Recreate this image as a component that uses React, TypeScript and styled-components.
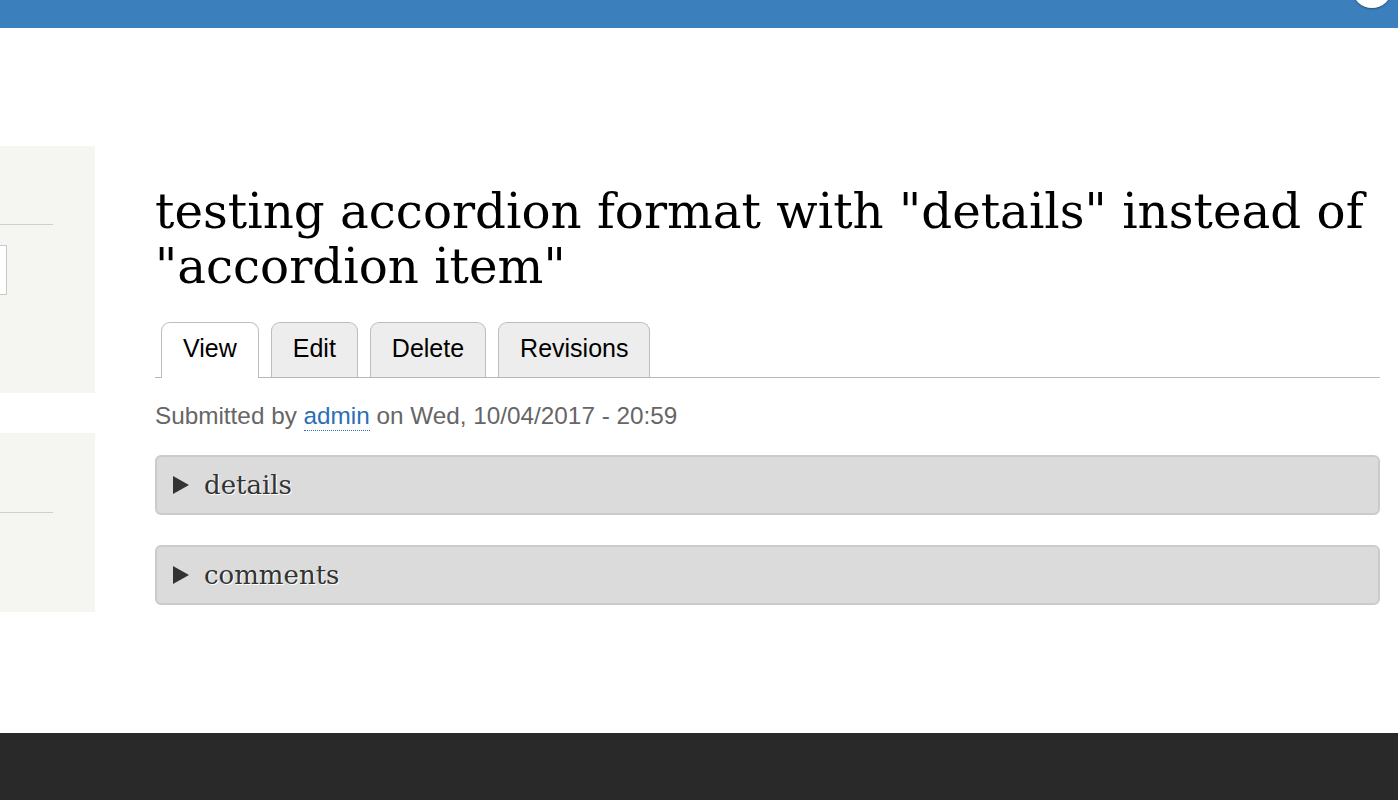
import styled, { createGlobalStyle } from 'styled-components';

const GlobalStyle = createGlobalStyle`
  html, body {
    margin: 0;
    padding: 0;
    background: #fff;
  }
  body {
    font-family: "Liberation Sans", Arial, sans-serif;
    overflow: hidden;
  }
`;

const Page = styled.div`
  width: 1398px;
  height: 800px;
  display: flex;
  flex-direction: column;
  overflow: hidden;
`;

const TopBar = styled.header`
  position: relative;
  height: 28px;
  flex: none;
  background: #3b80bc;
`;

const Avatar = styled.span`
  position: absolute;
  right: 6px;
  top: -32px;
  width: 40px;
  height: 40px;
  border-radius: 50%;
  background: #fff;
  box-shadow: 0 1px 2px rgba(0, 0, 0, 0.35);
`;

const Main = styled.main`
  flex: 1;
  display: flex;
  gap: 60px;
  padding-right: 18px;
`;

const Sidebar = styled.aside`
  width: 95px;
  flex: none;
  display: flex;
  flex-direction: column;
  gap: 40px;
  padding-top: 118px;
`;

const Block = styled.div<{ $h: number }>`
  height: ${p => p.$h}px;
  background: #f5f5f2;
  display: flex;
  flex-direction: column;
`;

const Rule = styled.div<{ $top: number }>`
  margin-top: ${p => p.$top}px;
  width: 53px;
  height: 1px;
  background: #cfcfcf;
`;

const SearchBox = styled.div`
  margin-top: 20px;
  width: 6px;
  height: 48px;
  border: 1px solid #c8c8c8;
  border-left: none;
  background: #fff;
`;

const Content = styled.section`
  flex: 1;
  padding-top: 156px;
`;

const Title = styled.h1`
  margin: 0;
  font-family: "DejaVu Serif", Georgia, serif;
  font-weight: normal;
  font-size: 48.3px;
  line-height: 55px;
  color: #000;
`;

const Tabs = styled.ul`
  margin: 28px 0 0;
  padding: 0 0 0 6px;
  list-style: none;
  display: flex;
  gap: 12px;
  border-bottom: 1px solid #b8b8b8;
`;

const Tab = styled.li<{ $active?: boolean }>`
  box-sizing: border-box;
  padding: 0 21px;
  border: 1px solid #bdbdbd;
  border-bottom: none;
  border-radius: 9px 9px 0 0;
  background: ${p => (p.$active ? '#fff' : '#ededed')};
  margin-bottom: ${p => (p.$active ? '-1px' : '0')};
  height: ${p => (p.$active ? '56px' : '55px')};
  font-size: 25px;
  line-height: 50px;
  color: #000;
`;

const Meta = styled.p`
  margin: 24px 0 0;
  font-size: 24.3px;
  line-height: 28px;
  color: #666;
`;

const Author = styled.a`
  color: #2b6fb6;
  text-decoration: none;
  padding-bottom: 1px;
  border-bottom: 1px dotted #2b6fb6;
`;

const Details = styled.details`
  margin-top: 25px;
  & + & {
    margin-top: 30px;
  }
`;

const Summary = styled.summary`
  list-style: none;
  height: 60px;
  box-sizing: border-box;
  display: flex;
  align-items: center;
  gap: 15px;
  padding: 0 16px;
  background: #dbdbdb;
  border: 2px solid #cbcbcb;
  border-radius: 6px;
  font-family: "DejaVu Serif", Georgia, serif;
  font-size: 26px;
  color: #333;
  text-shadow: 1px 1px 0 #fff;
  cursor: pointer;
  &::-webkit-details-marker {
    display: none;
  }
`;

const Arrow = styled.span`
  width: 0;
  height: 0;
  border-top: 9px solid transparent;
  border-bottom: 9px solid transparent;
  border-left: 16px solid #333;
`;

const Footer = styled.footer`
  height: 67px;
  flex: none;
  background: #292929;
`;

const tabs = ['View', 'Edit', 'Delete', 'Revisions'];

export default function App() {
  return (
    <Page>
      <GlobalStyle />
      <TopBar>
        <Avatar />
      </TopBar>
      <Main>
        <Sidebar>
          <Block $h={247}>
            <Rule $top={78} />
            <SearchBox />
          </Block>
          <Block $h={179}>
            <Rule $top={79} />
          </Block>
        </Sidebar>
        <Content>
          <Title>testing accordion format with "details" instead of "accordion item"</Title>
          <Tabs>
            {tabs.map((t, i) => (
              <Tab key={t} $active={i === 0}>{t}</Tab>
            ))}
          </Tabs>
          <Meta>
            Submitted by <Author href="#">admin</Author> on Wed, 10/04/2017 - 20:59
          </Meta>
          <Details>
            <Summary><Arrow />details</Summary>
          </Details>
          <Details>
            <Summary><Arrow />comments</Summary>
          </Details>
        </Content>
      </Main>
      <Footer />
    </Page>
  );
}
